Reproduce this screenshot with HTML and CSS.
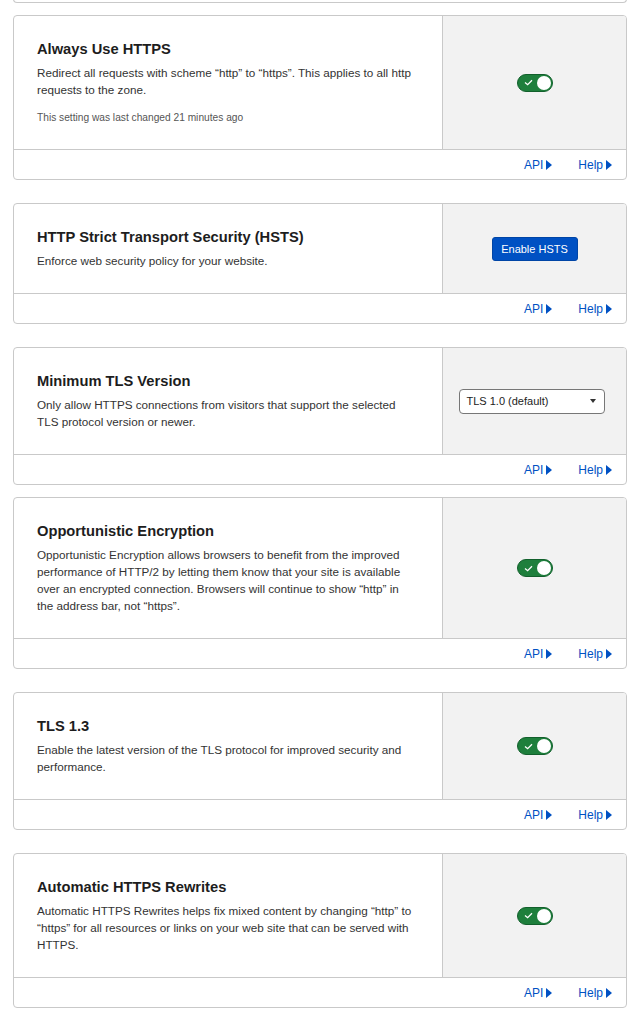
FILE: index.html
```html
<!DOCTYPE html>
<html>
<head>
<meta charset="utf-8">
<link rel="stylesheet" href="styles.css">
</head>
<body>
<div class="page">
  <div class="card card-prev"></div>

  <div class="card">
    <div class="card-main">
      <div class="card-text">
        <h3 class="title">Always Use HTTPS</h3>
        <p class="desc">Redirect all requests with scheme “http” to “https”. This applies to all http requests to the zone.</p>
        <p class="note">This setting was last changed 21 minutes ago</p>
      </div>
      <div class="card-control">
        <span class="toggle"><svg class="check" viewBox="0 0 10 8" width="9" height="7"><path d="M1 4 L4 6.5 L9 1.5" fill="none" stroke="#fff" stroke-width="1.5"/></svg><span class="knob"></span></span>
      </div>
    </div>
    <div class="card-footer"><a class="link">API<span class="caret"></span></a><a class="link">Help<span class="caret"></span></a></div>
  </div>

  <div class="card">
    <div class="card-main">
      <div class="card-text">
        <h3 class="title">HTTP Strict Transport Security (HSTS)</h3>
        <p class="desc">Enforce web security policy for your website.</p>
      </div>
      <div class="card-control">
        <button class="btn">Enable HSTS</button>
      </div>
    </div>
    <div class="card-footer"><a class="link">API<span class="caret"></span></a><a class="link">Help<span class="caret"></span></a></div>
  </div>

  <div class="card card-tight">
    <div class="card-main">
      <div class="card-text">
        <h3 class="title">Minimum TLS Version</h3>
        <p class="desc">Only allow HTTPS connections from visitors that support the selected TLS protocol version or newer.</p>
      </div>
      <div class="card-control">
        <div class="select"><span>TLS 1.0 (default)</span><span class="sel-caret"></span></div>
      </div>
    </div>
    <div class="card-footer"><a class="link">API<span class="caret"></span></a><a class="link">Help<span class="caret"></span></a></div>
  </div>

  <div class="card">
    <div class="card-main">
      <div class="card-text">
        <h3 class="title">Opportunistic Encryption</h3>
        <p class="desc">Opportunistic Encryption allows browsers to benefit from the improved performance of HTTP/2 by letting them know that your site is available over an encrypted connection. Browsers will continue to show “http” in the address bar, not “https”.</p>
      </div>
      <div class="card-control">
        <span class="toggle"><svg class="check" viewBox="0 0 10 8" width="9" height="7"><path d="M1 4 L4 6.5 L9 1.5" fill="none" stroke="#fff" stroke-width="1.5"/></svg><span class="knob"></span></span>
      </div>
    </div>
    <div class="card-footer"><a class="link">API<span class="caret"></span></a><a class="link">Help<span class="caret"></span></a></div>
  </div>

  <div class="card">
    <div class="card-main">
      <div class="card-text">
        <h3 class="title">TLS 1.3</h3>
        <p class="desc">Enable the latest version of the TLS protocol for improved security and performance.</p>
      </div>
      <div class="card-control">
        <span class="toggle"><svg class="check" viewBox="0 0 10 8" width="9" height="7"><path d="M1 4 L4 6.5 L9 1.5" fill="none" stroke="#fff" stroke-width="1.5"/></svg><span class="knob"></span></span>
      </div>
    </div>
    <div class="card-footer"><a class="link">API<span class="caret"></span></a><a class="link">Help<span class="caret"></span></a></div>
  </div>

  <div class="card">
    <div class="card-main">
      <div class="card-text">
        <h3 class="title">Automatic HTTPS Rewrites</h3>
        <p class="desc">Automatic HTTPS Rewrites helps fix mixed content by changing “http” to “https” for all resources or links on your web site that can be served with HTTPS.</p>
      </div>
      <div class="card-control">
        <span class="toggle"><svg class="check" viewBox="0 0 10 8" width="9" height="7"><path d="M1 4 L4 6.5 L9 1.5" fill="none" stroke="#fff" stroke-width="1.5"/></svg><span class="knob"></span></span>
      </div>
    </div>
    <div class="card-footer"><a class="link">API<span class="caret"></span></a><a class="link">Help<span class="caret"></span></a></div>
  </div>
</div>
</body>
</html>
```

FILE: styles.css
```css
* { box-sizing: border-box; }
html, body { margin: 0; padding: 0; background: #fff; }
body { font-family: "Liberation Sans", Arial, sans-serif; color: #222; }
.page { padding: 0 17px 0 13px; margin-top: -12px; }
.card {
  border: 1px solid #c9c9c9;
  border-radius: 4px;
  margin-bottom: 23px;
  background: #fff;
}
.card-tight { margin-bottom: 12px; }
.card-prev { height: 15px; margin-bottom: 12px; border-top: none; border-radius: 0 0 4px 4px; }
.card-main { display: flex; border-bottom: 1px solid #c9c9c9; }
.card-text { flex: 1; padding: 23px 24px 24px 23px; }
.card-control {
  width: 184px;
  flex: none;
  background: #f2f2f2;
  border-left: 1px solid #c9c9c9;
  display: flex;
  align-items: center;
  justify-content: center;
  border-top-right-radius: 3px;
}
.title { margin: 0 0 5px; font-size: 14.7px; line-height: 20px; font-weight: bold; color: #1d1d1d; }
.desc { margin: 0; font-size: 11.7px; line-height: 17px; color: #333; }
.note { margin: 13px 0 0; font-size: 10.2px; line-height: 14px; color: #555; }
.card-footer {
  height: 29px;
  display: flex;
  justify-content: flex-end;
  align-items: center;
  gap: 26px;
  padding-right: 14px;
}
.link { color: #0051c3; font-size: 12px; display: inline-flex; align-items: center; }
.caret {
  display: inline-block;
  width: 0; height: 0;
  border-top: 5px solid transparent;
  border-bottom: 5px solid transparent;
  border-left: 6px solid #0051c3;
  margin-left: 3px;
}
.toggle {
  position: relative;
  display: inline-flex;
  align-items: center;
  width: 36px; height: 18px;
  border-radius: 9px;
  background: #1e7f3c;
  border: 1px solid #12602c;
}
.check { margin-left: 6px; }
.knob {
  position: absolute;
  right: 1px; top: 1px;
  width: 14px; height: 14px;
  border-radius: 50%;
  background: #fff;
}
.btn {
  font-family: "Liberation Sans", Arial, sans-serif;
  background: #0051c3;
  color: #fff;
  border: 1px solid #0045a6;
  border-radius: 3px;
  font-size: 11px;
  height: 24px;
  width: 86px;
  padding: 0;
}
.select {
  width: 146px; height: 25px;
  border: 1px solid #777;
  border-radius: 4px;
  background: #fff;
  display: flex;
  align-items: center;
  justify-content: space-between;
  padding: 0 8px 0 7px;
  margin-right: 6px;
  font-size: 11px;
  color: #222;
}
.sel-caret {
  width: 0; height: 0;
  border-left: 3.5px solid transparent;
  border-right: 3.5px solid transparent;
  border-top: 4px solid #333;
}
```
